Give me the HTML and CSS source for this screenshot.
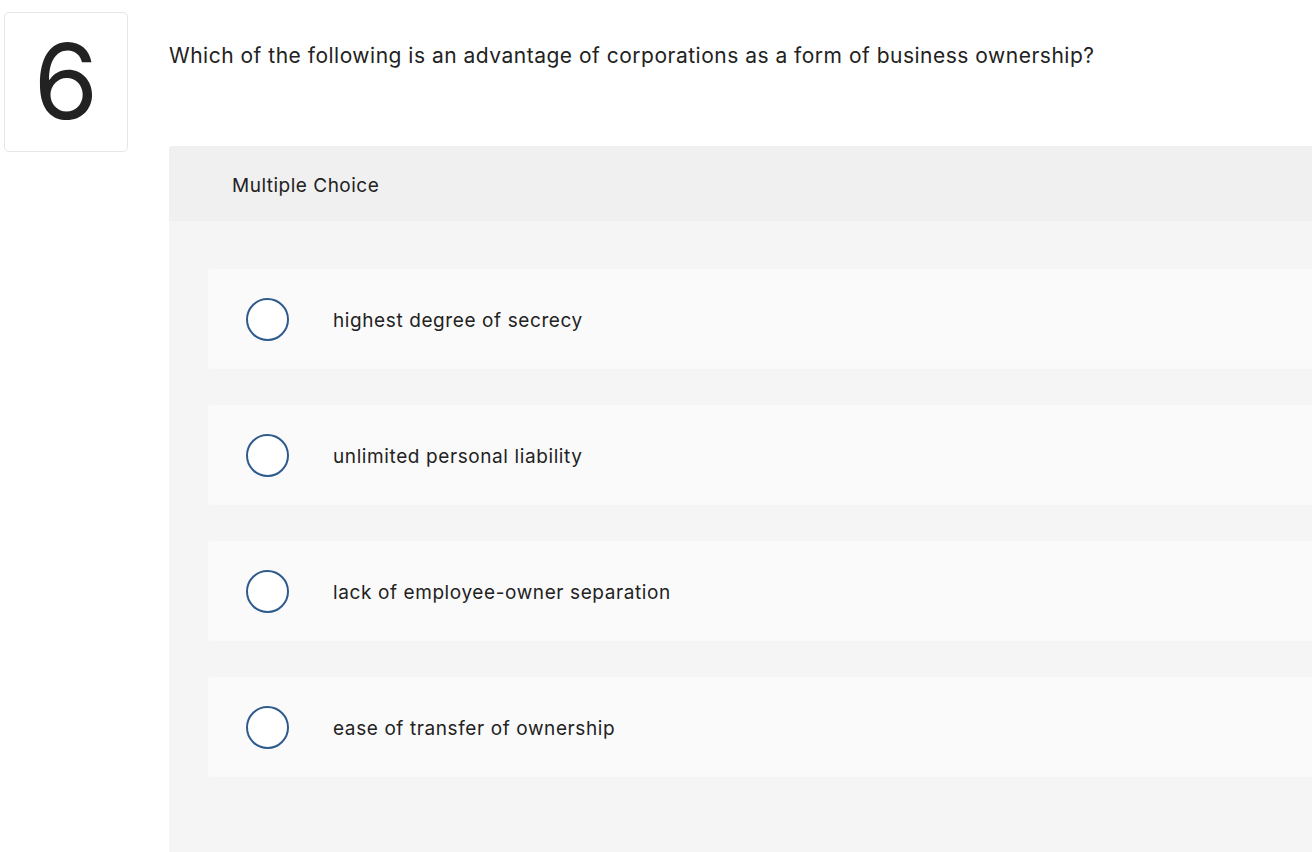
FILE: index.html
```html
<!DOCTYPE html>
<html lang="en">
<head>
  <meta charset="UTF-8">
  <meta name="viewport" content="width=device-width, initial-scale=1.0">
  <title>Question 6</title>
  <link rel="stylesheet" href="styles.css">
</head>
<body>
  <div class="question">
    <div class="number-box">
      <span class="number">6</span>
    </div>

    <div class="question-main">
      <p class="prompt">Which of the following is an advantage of corporations as a form of business ownership?</p>

      <div class="choice-panel">
        <div class="choice-header">Multiple Choice</div>

        <div class="choice-list">
          <label class="choice">
            <span class="radio"></span>
            <span class="choice-text">highest degree of secrecy</span>
          </label>
          <label class="choice">
            <span class="radio"></span>
            <span class="choice-text">unlimited personal liability</span>
          </label>
          <label class="choice">
            <span class="radio"></span>
            <span class="choice-text">lack of employee-owner separation</span>
          </label>
          <label class="choice">
            <span class="radio"></span>
            <span class="choice-text">ease of transfer of ownership</span>
          </label>
        </div>
      </div>
    </div>
  </div>
</body>
</html>
```

FILE: styles.css
```css
html, body {
  margin: 0;
  padding: 0;
  overflow: hidden;
}

body {
  font-family: Inter, "Open Sans", sans-serif;
  color: #222;
  background: #fff;
}

.question {
  display: flex;
  align-items: flex-start;
  padding: 12px 0 0 4px;
  gap: 41px;
}

.number-box {
  flex: none;
  width: 122px;
  height: 138px;
  border: 1px solid #e6e6e6;
  border-radius: 5px;
  display: flex;
  align-items: center;
  justify-content: center;
  box-sizing: content-box;
}

.number {
  font-size: 104px;
  font-weight: 400;
  line-height: 1;
  color: #222;
  margin-top: -3px;
}

.question-main {
  flex: 1;
  min-width: 0;
}

.prompt {
  margin: 30px 0 0 0;
  font-size: 21px;
  letter-spacing: 0.5px;
  line-height: 28px;
}

.choice-panel {
  margin-top: 76px;
  background: #f5f5f5;
  border-top-left-radius: 3px;
  min-height: 720px;
}

.choice-header {
  background: #f0f0f0;
  height: 75px;
  box-sizing: border-box;
  display: flex;
  align-items: center;
  padding: 3px 0 0 63px;
  font-size: 19px;
  letter-spacing: 0.5px;
  border-top-left-radius: 3px;
}

.choice-list {
  display: flex;
  flex-direction: column;
  gap: 36px;
  padding: 48px 0 0 39px;
}

.choice {
  display: flex;
  align-items: center;
  height: 100px;
  background: #fafafa;
  border-radius: 4px 0 0 4px;
  padding-left: 38px;
  cursor: pointer;
}

.radio {
  flex: none;
  width: 39px;
  height: 39px;
  border: 2px solid #2d5b8e;
  border-radius: 50%;
  background: #fff;
}

.choice-text {
  margin-left: 44px;
  padding-top: 2px;
  font-size: 19px;
  letter-spacing: 0.6px;
}
```
